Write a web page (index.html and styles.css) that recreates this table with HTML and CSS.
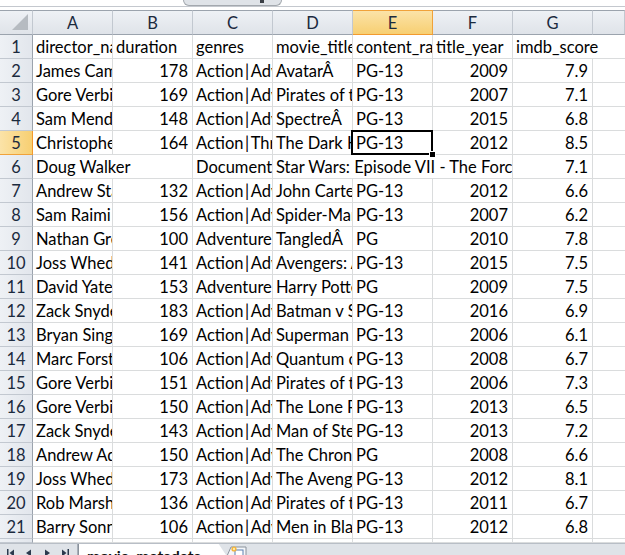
FILE: index.html
```html
<!DOCTYPE html>
<html>
<head>
<meta charset="utf-8">
<link rel="stylesheet" href="styles.css">
</head>
<body>
<div class="topstrip">
  <div class="fxbox"><span class="fxicon"></span></div>
</div>
<div class="sheet">
  <div class="corner"><span class="tri"></span></div>
  <div class="ch">A</div><div class="ch">B</div><div class="ch">C</div><div class="ch">D</div><div class="ch sel">E</div><div class="ch">F</div><div class="ch">G</div><div class="ch last"></div>

  <div class="rh">1</div><div class="c">director_name</div><div class="c">duration</div><div class="c">genres</div><div class="c">movie_title</div><div class="c">content_rating</div><div class="c">title_year</div><div class="c span2 last">imdb_score</div>
  <div class="rh">2</div><div class="c">James Cameron</div><div class="c n">178</div><div class="c">Action<span class="p">|</span>Adventure</div><div class="c">AvatarÂ</div><div class="c">PG-13</div><div class="c n">2009</div><div class="c n">7.9</div><div class="c last"></div>
  <div class="rh">3</div><div class="c">Gore Verbinski</div><div class="c n">169</div><div class="c">Action<span class="p">|</span>Adventure</div><div class="c">Pirates of the Caribbean</div><div class="c">PG-13</div><div class="c n">2007</div><div class="c n">7.1</div><div class="c last"></div>
  <div class="rh">4</div><div class="c">Sam Mendes</div><div class="c n">148</div><div class="c">Action<span class="p">|</span>Adventure</div><div class="c">SpectreÂ</div><div class="c">PG-13</div><div class="c n">2015</div><div class="c n">6.8</div><div class="c last"></div>
  <div class="rh hl">5</div><div class="c">Christopher Nolan</div><div class="c n">164</div><div class="c">Action<span class="p">|</span>Thriller</div><div class="c">The Dark Knight Rises</div><div class="c active">PG-13<span class="handle"></span></div><div class="c n">2012</div><div class="c n">8.5</div><div class="c last"></div>
  <div class="rh">6</div><div class="c span2">Doug Walker</div><div class="c">Documentary</div><div class="c span3">Star Wars: Episode VII - The Force Awakens</div><div class="c n">7.1</div><div class="c last"></div>
  <div class="rh">7</div><div class="c">Andrew Stanton</div><div class="c n">132</div><div class="c">Action<span class="p">|</span>Adventure</div><div class="c">John Carter</div><div class="c">PG-13</div><div class="c n">2012</div><div class="c n">6.6</div><div class="c last"></div>
  <div class="rh">8</div><div class="c">Sam Raimi</div><div class="c n">156</div><div class="c">Action<span class="p">|</span>Adventure</div><div class="c">Spider-Man 3</div><div class="c">PG-13</div><div class="c n">2007</div><div class="c n">6.2</div><div class="c last"></div>
  <div class="rh">9</div><div class="c">Nathan Greno</div><div class="c n">100</div><div class="c">Adventure<span class="p">|</span>Animation</div><div class="c">TangledÂ</div><div class="c">PG</div><div class="c n">2010</div><div class="c n">7.8</div><div class="c last"></div>
  <div class="rh">10</div><div class="c">Joss Whedon</div><div class="c n">141</div><div class="c">Action<span class="p">|</span>Adventure</div><div class="c">Avengers: Age of Ultron</div><div class="c">PG-13</div><div class="c n">2015</div><div class="c n">7.5</div><div class="c last"></div>
  <div class="rh">11</div><div class="c">David Yates</div><div class="c n">153</div><div class="c">Adventure<span class="p">|</span>Family</div><div class="c">Harry Potter and the Half-Blood Prince</div><div class="c">PG</div><div class="c n">2009</div><div class="c n">7.5</div><div class="c last"></div>
  <div class="rh">12</div><div class="c">Zack Snyder</div><div class="c n">183</div><div class="c">Action<span class="p">|</span>Adventure</div><div class="c">Batman v Superman</div><div class="c">PG-13</div><div class="c n">2016</div><div class="c n">6.9</div><div class="c last"></div>
  <div class="rh">13</div><div class="c">Bryan Singer</div><div class="c n">169</div><div class="c">Action<span class="p">|</span>Adventure</div><div class="c">Superman Returns</div><div class="c">PG-13</div><div class="c n">2006</div><div class="c n">6.1</div><div class="c last"></div>
  <div class="rh">14</div><div class="c">Marc Forster</div><div class="c n">106</div><div class="c">Action<span class="p">|</span>Adventure</div><div class="c">Quantum of Solace</div><div class="c">PG-13</div><div class="c n">2008</div><div class="c n">6.7</div><div class="c last"></div>
  <div class="rh">15</div><div class="c">Gore Verbinski</div><div class="c n">151</div><div class="c">Action<span class="p">|</span>Adventure</div><div class="c">Pirates of the Caribbean</div><div class="c">PG-13</div><div class="c n">2006</div><div class="c n">7.3</div><div class="c last"></div>
  <div class="rh">16</div><div class="c">Gore Verbinski</div><div class="c n">150</div><div class="c">Action<span class="p">|</span>Adventure</div><div class="c">The Lone Ranger</div><div class="c">PG-13</div><div class="c n">2013</div><div class="c n">6.5</div><div class="c last"></div>
  <div class="rh">17</div><div class="c">Zack Snyder</div><div class="c n">143</div><div class="c">Action<span class="p">|</span>Adventure</div><div class="c">Man of Steel</div><div class="c">PG-13</div><div class="c n">2013</div><div class="c n">7.2</div><div class="c last"></div>
  <div class="rh">18</div><div class="c">Andrew Adamson</div><div class="c n">150</div><div class="c">Action<span class="p">|</span>Adventure</div><div class="c">The Chronicles of Narnia</div><div class="c">PG</div><div class="c n">2008</div><div class="c n">6.6</div><div class="c last"></div>
  <div class="rh">19</div><div class="c">Joss Whedon</div><div class="c n">173</div><div class="c">Action<span class="p">|</span>Adventure</div><div class="c">The Avengers</div><div class="c">PG-13</div><div class="c n">2012</div><div class="c n">8.1</div><div class="c last"></div>
  <div class="rh">20</div><div class="c">Rob Marshall</div><div class="c n">136</div><div class="c">Action<span class="p">|</span>Adventure</div><div class="c">Pirates of the Caribbean</div><div class="c">PG-13</div><div class="c n">2011</div><div class="c n">6.7</div><div class="c last"></div>
  <div class="rh">21</div><div class="c">Barry Sonnenfeld</div><div class="c n">106</div><div class="c">Action<span class="p">|</span>Adventure</div><div class="c">Men in Black 3</div><div class="c">PG-13</div><div class="c n">2012</div><div class="c n">6.8</div><div class="c last"></div>
  <div class="rh">22</div><div class="c"></div><div class="c"></div><div class="c"></div><div class="c"></div><div class="c"></div><div class="c"></div><div class="c"></div><div class="c last"></div>
</div>
<div class="tabbar">
  <div class="nav">
    <svg width="72" height="12" viewBox="0 0 72 12">
      <rect x="7" y="5" width="1.5" height="7" fill="#2b3a4e"/>
      <path d="M9.5 9 L14 5.5 L14 12.5 Z" fill="#2b3a4e"/>
      <path d="M26 9 L31 5.5 L31 12.5 Z" fill="#2b3a4e"/>
      <path d="M50 9 L45 5.5 L45 12.5 Z" fill="#2b3a4e"/>
      <path d="M66.5 9 L62 5.5 L62 12.5 Z" fill="#2b3a4e"/>
      <rect x="67.5" y="5" width="1.5" height="7" fill="#2b3a4e"/>
    </svg>
  </div>
  <div class="tab">movie_metadata</div>
  <div class="newsheet">
    <svg width="22" height="12" viewBox="0 0 22 12">
      <path d="M1 12 L5 3 L20 3 L20 12" fill="#f4f6f9" stroke="#8a929c" stroke-width="1"/>
      <rect x="9" y="6" width="8" height="6" fill="#fff" stroke="#5b7fb0" stroke-width="1"/>
      <circle cx="8" cy="5" r="2.6" fill="#f3b43a"/>
      <circle cx="8" cy="5" r="1.2" fill="#fde9a8"/>
    </svg>
  </div>
</div>
</body>
</html>
```
FILE: styles.css
```css
html, body {
  margin: 0;
  padding: 0;
  width: 625px;
  height: 555px;
  overflow: hidden;
  background: #ffffff;
  font-family: "Lato", "Open Sans", sans-serif;
  font-size: 16.5px;
  color: #000;
}

.topstrip {
  height: 10px;
  position: relative;
  background: #fff;
}
.topstrip::before {
  content: "";
  display: block;
  height: 6px;
  border-bottom: 1px solid #c4c8ce;
}
.fxbox {
  position: absolute;
  left: 183px;
  top: 0;
  width: 99px;
  height: 6px;
  box-sizing: border-box;
  background: #dfe3e8;
  border: 1px solid #a3a8ae;
  border-top: 0;
  border-radius: 0 0 6px 6px;
}
.fxicon {
  position: absolute;
  right: 17px;
  top: 0;
  width: 4px;
  height: 3px;
  background: #3a3f46;
}

.sheet {
  display: grid;
  grid-template-columns: 33px repeat(7, 80px) 1fr;
  grid-template-rows: 25px repeat(21, 24px) 4px;
  overflow: hidden;
}

.corner, .ch {
  background: linear-gradient(#eef1f5, #dfe3e9);
  border-top: 1px solid #9ba3ad;
  border-bottom: 1px solid #9ba3ad;
  border-right: 1px solid #c2c8d0;
  box-sizing: border-box;
}
.corner {
  position: relative;
}
.tri {
  position: absolute;
  right: 4px;
  bottom: 4px;
  width: 0;
  height: 0;
  border-left: 16px solid transparent;
  border-bottom: 16px solid #b6bbc1;
}
.ch {
  text-align: center;
  padding-top: 1px;
  line-height: 23px;
  color: #1b2a3e;
}
.ch.sel {
  background: linear-gradient(#fbe3a8, #f7cf72);
  border-color: #f0a23a;
  border-bottom: 1px solid #f29a2e;
}

.rh {
  background: linear-gradient(90deg, #eef1f5, #e2e6ec);
  border-right: 1px solid #9ba3ad;
  border-bottom: 1px solid #c2c8d0;
  box-sizing: border-box;
  text-align: center;
  padding-top: 2px;
  line-height: 21px;
  overflow: hidden;
  color: #1b2a3e;
}
.rh.hl {
  background: linear-gradient(90deg, #fbe3a8, #f7cf72);
  border-right-color: #f29a2e;
  border-bottom-color: #f0a23a;
}

.c {
  box-sizing: border-box;
  border-right: 1px solid #dadcdd;
  border-bottom: 1px solid #dadcdd;
  padding: 2px 3px 0;
  line-height: 21px;
  white-space: nowrap;
  overflow: hidden;
  position: relative;
}
.c.n {
  text-align: right;
  padding-right: 4px;
}
.c.span2 { grid-column: span 2; }
.c.span3 { grid-column: span 3; }
.c.last { border-right: 0; }
.p {
  margin: 0 1.5px;
}

.c.active {
  overflow: visible;
  z-index: 2;
}
.c.active::before {
  content: "";
  position: absolute;
  left: -2px;
  top: -1px;
  right: -1px;
  bottom: -1px;
  border: 2px solid #000;
  pointer-events: none;
}
.handle {
  position: absolute;
  right: -4px;
  bottom: -4px;
  width: 5px;
  height: 5px;
  background: #000;
  border: 1px solid #fff;
}

.tabbar {
  height: 12px;
  display: flex;
  background: #dfe3e8;
  border-top: 1px solid #b8bec6;
  box-sizing: border-box;
  overflow: hidden;
}
.nav {
  width: 77px;
  border-right: 1px solid #a8afb8;
  flex: none;
}
.nav svg { display: block; }
.tab {
  flex: none;
  width: 140px;
  background: #ffffff;
  border-left: 1px solid #8a929c;
  padding-left: 8px;
  font-weight: bold;
  font-size: 15.5px;
  line-height: 26px;
  margin-top: -1px;
  box-sizing: border-box;
  color: #111;
  position: relative;
}
.tab::after {
  content: "";
  position: absolute;
  right: -8px;
  top: 0;
  border-left: 8px solid #ffffff;
  border-top: 12px solid transparent;
}
.newsheet {
  flex: none;
  margin-left: 8px;
}
.newsheet svg { display: block; }
```
